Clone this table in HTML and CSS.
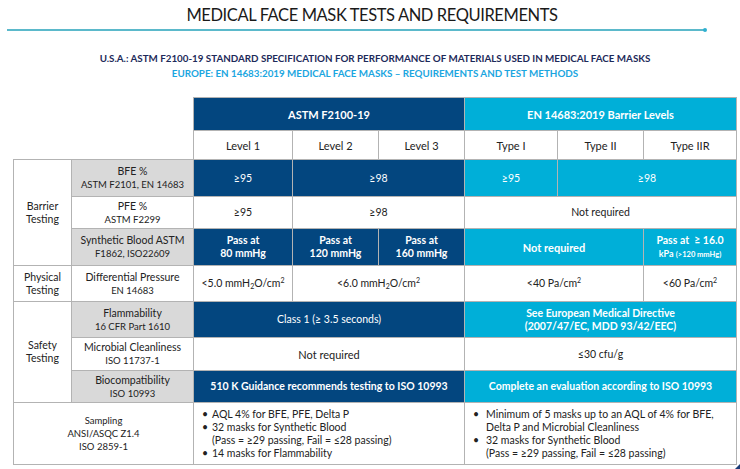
FILE: index.html
```html
<!DOCTYPE html>
<html>
<head>
<meta charset="utf-8">
<title>Medical Face Mask Tests and Requirements</title>
<link rel="stylesheet" href="styles.css">
</head>
<body>
<header class="top">
  <h1 class="title">MEDICAL FACE MASK TESTS AND REQUIREMENTS</h1>
  <div class="rule"></div>
  <p class="sub sub-us">U.S.A.: ASTM F2100-19 STANDARD SPECIFICATION FOR PERFORMANCE OF MATERIALS USED IN MEDICAL FACE MASKS</p>
  <p class="sub sub-eu">EUROPE: EN 14683:2019 MEDICAL FACE MASKS – REQUIREMENTS AND TEST METHODS</p>
</header>
<table class="grid">
  <colgroup>
    <col class="c-cat"><col class="c-test"><col class="c-l1"><col class="c-l2"><col class="c-l3"><col class="c-t1"><col class="c-t2"><col class="c-t3">
  </colgroup>
  <tr class="r-h1">
    <td class="blank" colspan="2"></td>
    <th class="navy hd" colspan="3">ASTM F2100-19</th>
    <th class="cyan hd" colspan="3">EN 14683:2019 Barrier Levels</th>
  </tr>
  <tr class="r-h2">
    <td class="blank" colspan="2"></td>
    <th class="lv">Level 1</th><th class="lv">Level 2</th><th class="lv">Level 3</th>
    <th class="lv">Type I</th><th class="lv">Type II</th><th class="lv">Type IIR</th>
  </tr>
  <tr class="r-bfe">
    <td class="cat" rowspan="3">Barrier<br>Testing</td>
    <td class="test grey"><span class="tn">BFE %</span><br><span class="ts">ASTM F2101, EN 14683</span></td>
    <td class="navy">≥95</td>
    <td class="navy" colspan="2">≥98</td>
    <td class="cyan">≥95</td>
    <td class="cyan" colspan="2">≥98</td>
  </tr>
  <tr class="r-pfe">
    <td class="test"><span class="tn">PFE %</span><br><span class="ts">ASTM F2299</span></td>
    <td>≥95</td>
    <td colspan="2">≥98</td>
    <td colspan="3">Not required</td>
  </tr>
  <tr class="r-syn">
    <td class="test grey"><span class="tn">Synthetic Blood ASTM</span><br><span class="ts">F1862, ISO22609</span></td>
    <td class="navy b">Pass at<br>80 mmHg</td>
    <td class="navy b">Pass at<br>120 mmHg</td>
    <td class="navy b">Pass at<br>160 mmHg</td>
    <td class="cyan b big" colspan="2">Not required</td>
    <td class="cyan b">Pass at&nbsp; ≥ 16.0<br><span class="kpa">kPa <span class="tiny">(&gt;120 mmHg)</span></span></td>
  </tr>
  <tr class="r-dp">
    <td class="cat">Physical<br>Testing</td>
    <td class="test"><span class="tn">Differential Pressure</span><br><span class="ts">EN 14683</span></td>
    <td>&lt;5.0 mmH<sub>2</sub>O/cm<sup>2</sup></td>
    <td colspan="2">&lt;6.0 mmH<sub>2</sub>O/cm<sup>2</sup></td>
    <td colspan="2">&lt;40 Pa/cm<sup>2</sup></td>
    <td>&lt;60 Pa/cm<sup>2</sup></td>
  </tr>
  <tr class="r-fl">
    <td class="cat" rowspan="3">Safety<br>Testing</td>
    <td class="test grey"><span class="tn">Flammability</span><br><span class="ts">16 CFR Part 1610</span></td>
    <td class="navy" colspan="3">Class 1 (≥ 3.5 seconds)</td>
    <td class="cyan b" colspan="3">See European Medical Directive<br>(2007/47/EC, MDD 93/42/EEC)</td>
  </tr>
  <tr class="r-mc">
    <td class="test"><span class="tn">Microbial Cleanliness</span><br><span class="ts">ISO 11737-1</span></td>
    <td colspan="3" class="big">Not required</td>
    <td colspan="3">≤30 cfu/g</td>
  </tr>
  <tr class="r-bio">
    <td class="test grey"><span class="tn">Biocompatibility</span><br><span class="ts">ISO 10993</span></td>
    <td class="navy b" colspan="3">510 K Guidance recommends testing to ISO 10993</td>
    <td class="cyan b" colspan="3">Complete an evaluation according to ISO 10993</td>
  </tr>
  <tr class="r-smp">
    <td class="samp" colspan="2">Sampling<br>ANSI/ASQC Z1.4<br>ISO 2859-1</td>
    <td class="list-cell" colspan="3">
      <ul class="bl bl-us">
        <li><span>AQL 4% for BFE, PFE, Delta P</span></li>
        <li><span>32 masks for Synthetic Blood<br>(Pass = ≥29 passing, Fail = ≤28 passing)</span></li>
        <li><span>14 masks for Flammability</span></li>
      </ul>
    </td>
    <td class="list-cell" colspan="3">
      <ul class="bl bl-eu">
        <li><span>Minimum of 5 masks up to an AQL of 4% for BFE,<br>Delta P and Microbial Cleanliness</span></li>
        <li><span>32 masks for Synthetic Blood<br>(Pass = ≥29 passing, Fail = ≤28 passing)</span></li>
      </ul>
    </td>
  </tr>
</table>
<div class="corner"></div>
</body>
</html>
```

FILE: styles.css
```css
* { box-sizing: border-box; }
html, body { margin: 0; padding: 0; background: #ffffff; }
body {
  font-family: Lato, "Open Sans", "Liberation Sans", sans-serif;
  color: #222222;
  width: 740px;
  height: 469px;
  overflow: hidden;
  position: relative;
}

.top { padding-top: 4px; }
.title {
  margin: 0;
  font-size: 16.5px;
  font-weight: 400;
  letter-spacing: -0.4px;
  line-height: 22px;
  text-align: center;
  color: #1a1a1a;
  padding-left: 4px;
}
.rule {
  margin: 3px 35px 0 7px;
  height: 2px;
  background: #5bb9cb;
  position: relative;
}
.rule::after {
  content: "";
  position: absolute;
  right: -2px;
  top: -1px;
  width: 4px;
  height: 4px;
  border-radius: 50%;
  background: #2fb0d0;
}
.sub {
  margin: 0;
  text-align: center;
  font-weight: 700;
  font-size: 9.8px;
  line-height: 14px;
  padding-left: 10px;
}
.sub-us { margin-top: 20px; color: #1d2a5a; }
.sub-eu { margin-top: 1px; color: #1ba6e0; }

.grid {
  margin: 17px 0 0 13px;
  width: 723px;
  table-layout: fixed;
  border-collapse: collapse;
  font-size: 10.5px;
}
.c-cat { width: 58px; }
.c-test { width: 122px; }
.c-l1 { width: 99px; }
.c-l2 { width: 86px; }
.c-l3 { width: 86px; }
.c-t1 { width: 93px; }
.c-t2 { width: 86px; }
.c-t3 { width: 93px; }

.grid td, .grid th {
  border: 1px solid #b3b3b3;
  text-align: center;
  vertical-align: middle;
  padding: 0 2px;
  font-weight: 400;
  line-height: 13px;
  color: #222222;
}
.grid td.blank { border: none; }

.r-h1 { height: 33px; }
.r-h2 { height: 29px; }
.r-bfe { height: 37px; }
.r-pfe { height: 32px; }
.r-syn { height: 37px; }
.r-dp { height: 36px; }
.r-fl { height: 36px; }
.r-mc { height: 33px; }
.r-bio { height: 32px; }
.r-smp { height: 62px; }

.grid .navy { background: #03467f; color: #ffffff; }
.grid .cyan { background: #00afd8; color: #ffffff; }
.grid .grey { background: #d9d9d9; }
.grid .hd { font-weight: 700; font-size: 11px; }
.grid .lv { font-size: 11px; }
.grid .b { font-weight: 700; }
.grid .big { font-size: 11px; }

.cat { font-size: 10.5px; }
.tn { font-size: 10.5px; }
.ts { font-size: 9.5px; }
.kpa { font-size: 9px; }
.tiny { font-size: 7.5px; }

sub, sup { font-size: 7px; line-height: 0; }
sub { vertical-align: -2px; }
sup { vertical-align: 4px; }

.samp { font-size: 9.5px; }
.grid td.list-cell { text-align: left; padding: 0 4px 0 8px; }
.bl { margin: 0; padding: 0; list-style: none; }
.bl li { display: flex; line-height: 13px; }
.bl li::before { content: "•"; flex: 0 0 10px; }
.bl-eu li::before { flex-basis: 13px; }

.corner {
  position: absolute;
  right: 0;
  bottom: 0;
  width: 0;
  height: 0;
  border-left: 5px solid transparent;
  border-bottom: 5px solid #1d3c78;
}
```
